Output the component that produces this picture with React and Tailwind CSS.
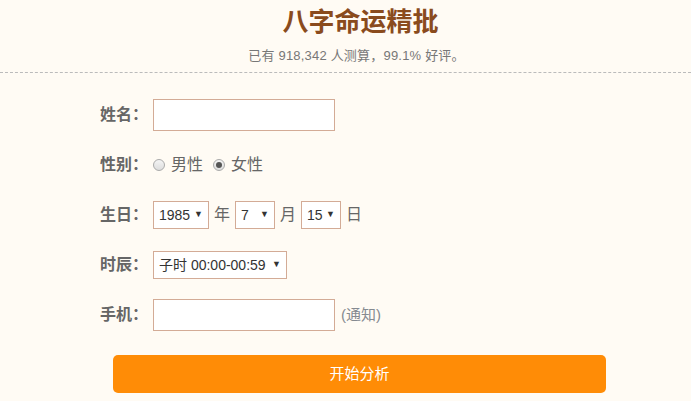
import React from "react";

const font = { fontFamily: '"Liberation Sans", "Noto Sans CJK SC", sans-serif' };

function Label({ children }) {
  return (
    <div className="w-[53px] shrink-0 text-[16px] font-bold text-[#666]">{children}</div>
  );
}

function Select({ value, w }) {
  return (
    <div
      className={`${w} h-[28px] border border-[#d3ab96] bg-white flex items-center justify-between pl-[5px] pr-[5px] text-[14px] text-[#333]`}
    >
      <span>{value}</span>
      <span className="text-[9px] text-[#333]">▼</span>
    </div>
  );
}

function Radio({ checked }) {
  return (
    <span className="w-[12px] h-[12px] rounded-full border border-[#aaa] bg-gradient-to-b from-[#f4f4f4] to-[#ddd] flex items-center justify-center">
      {checked && <span className="w-[6px] h-[6px] rounded-full bg-[#555]" />}
    </span>
  );
}

export default function App() {
  return (
    <div className="w-[691px] h-[401px] bg-[#fffbf4] overflow-hidden" style={font}>
      <div className="pt-[5px] pb-[6px] border-b border-dashed border-[#bbb] text-center pl-[30px]">
        <div className="h-[34px] leading-[34px] text-[26px] font-bold text-[#8a4b1d]">八字命运精批</div>
        <div className="mt-[7px] pr-[8px] leading-[20px] text-[13px] tracking-[0.2px] text-[#777]">已有 918,342 人测算，99.1% 好评。</div>
      </div>
      <div className="pt-[17px] pl-[100px]">
        <div className="h-[50px] flex items-center">
          <Label>姓名：</Label>
          <div className="w-[182px] h-[32px] border border-[#d3ab96] bg-white" />
        </div>
        <div className="h-[50px] flex items-center text-[16px] text-[#666]">
          <Label>性别：</Label>
          <Radio />
          <span className="ml-[6px]">男性</span>
          <span className="ml-[10px]"><Radio checked /></span>
          <span className="ml-[6px]">女性</span>
        </div>
        <div className="h-[50px] flex items-center gap-[5px] text-[16px] text-[#666]">
          <Label>生日：</Label>
          <div className="-ml-[5px]"><Select value="1985" w="w-[56px]" /></div>
          <span>年</span>
          <Select value="7" w="w-[40px]" />
          <span>月</span>
          <Select value="15" w="w-[40px]" />
          <span>日</span>
        </div>
        <div className="h-[50px] flex items-center">
          <Label>时辰：</Label>
          <Select value="子时 00:00-00:59" w="w-[134px]" />
        </div>
        <div className="h-[50px] flex items-center">
          <Label>手机：</Label>
          <div className="w-[182px] h-[32px] border border-[#d3ab96] bg-white" />
          <span className="ml-[6px] text-[15px] text-[#858a90]">(通知)</span>
        </div>
      </div>
      <div className="mt-[15px] ml-[113px] w-[493px] h-[38px] rounded-[5px] bg-[#ff8c06] flex items-center justify-center text-white text-[15px]">
        开始分析
      </div>
    </div>
  );
}
